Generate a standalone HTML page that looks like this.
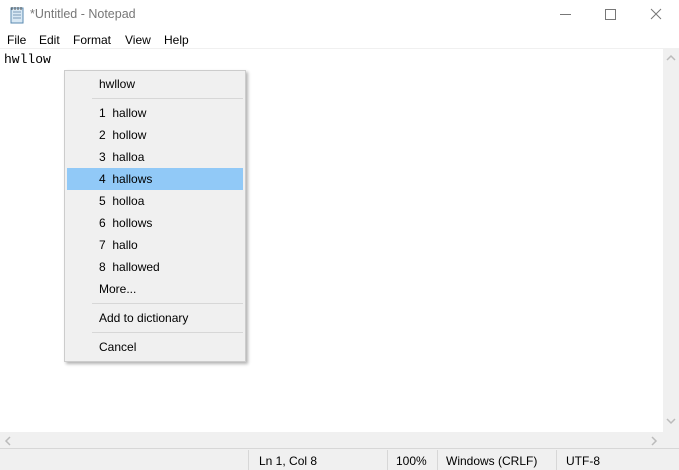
<!DOCTYPE html>
<html><head><style>
body{margin:0;width:679px;height:470px;overflow:hidden;background:#fff;font-family:"Segoe UI","Liberation Sans",sans-serif;font-size:12px;color:#000;position:relative}
.a{position:absolute}
.mi{position:absolute;left:99px;font-size:12px;color:#000}
</style></head><body>
<div class="a" style="left:0;top:0;width:679px;height:30px;background:#fff"></div>
<svg class="a" style="left:8px;top:6px" width="18" height="18"><rect x="3" y="2" width="12" height="15" fill="#d8e8f4" stroke="#5a8ab0"/><path d="M5 6h8M5 9h8M5 12h8" stroke="#7a9ab8"/><path d="M4 1v3M7 1v3M10 1v3M13 1v3" stroke="#555"/></svg>
<div class="a" style="left:30px;top:7px;font-size:12.5px;color:#777">*Untitled - Notepad</div>
<div class="a" style="left:560px;top:14px;width:11px;height:1px;background:#777"></div>
<div class="a" style="left:605px;top:9px;width:9px;height:9px;border:1px solid #777"></div>
<svg class="a" style="left:650px;top:8px" width="12" height="12"><path d="M1 1L11 11M11 1L1 11" stroke="#777"/></svg>
<div class="a" style="left:0;top:30px;width:679px;height:18px;background:#fff"></div>
<div class="a" style="left:7px;top:33px">File</div>
<div class="a" style="left:39px;top:33px">Edit</div>
<div class="a" style="left:73px;top:33px">Format</div>
<div class="a" style="left:125px;top:33px">View</div>
<div class="a" style="left:164px;top:33px">Help</div>
<div class="a" style="left:0;top:48px;width:679px;height:1px;background:#f0f0f0"></div>
<div class="a" style="left:4px;top:52px;font-family:'Liberation Mono',monospace;font-size:13px">hwllow</div>
<div class="a" style="left:663px;top:49px;width:16px;height:383px;background:#f0f0f0"></div>
<svg class="a" style="left:666px;top:54px" width="10" height="8"><path d="M1 6L5 2L9 6" stroke="#bbb" fill="none" stroke-width="1.5"/></svg>
<svg class="a" style="left:666px;top:417px" width="10" height="8"><path d="M1 2L5 6L9 2" stroke="#bbb" fill="none" stroke-width="1.5"/></svg>
<div class="a" style="left:0;top:432px;width:663px;height:16px;background:#f0f0f0"></div>
<div class="a" style="left:663px;top:432px;width:16px;height:16px;background:#f0f0f0"></div>
<svg class="a" style="left:4px;top:436px" width="8" height="10"><path d="M6 1L2 5L6 9" stroke="#bbb" fill="none" stroke-width="1.5"/></svg>
<svg class="a" style="left:650px;top:436px" width="8" height="10"><path d="M2 1L6 5L2 9" stroke="#bbb" fill="none" stroke-width="1.5"/></svg>
<div class="a" style="left:0;top:448px;width:679px;height:22px;background:#f0f0f0;border-top:1px solid #d7d7d7;box-sizing:border-box"></div>
<div class="a" style="left:248px;top:450px;width:1px;height:20px;background:#d7d7d7"></div>
<div class="a" style="left:387px;top:450px;width:1px;height:20px;background:#d7d7d7"></div>
<div class="a" style="left:437px;top:450px;width:1px;height:20px;background:#d7d7d7"></div>
<div class="a" style="left:556px;top:450px;width:1px;height:20px;background:#d7d7d7"></div>
<div class="a" style="left:259px;top:454px">Ln 1, Col 8</div>
<div class="a" style="left:396px;top:454px">100%</div>
<div class="a" style="left:446px;top:454px">Windows (CRLF)</div>
<div class="a" style="left:566px;top:454px">UTF-8</div>
<div class="a" style="left:64px;top:70px;width:182px;height:292px;background:#f0f0f0;border:1px solid #ccc;box-sizing:border-box;box-shadow:2px 2px 3px rgba(0,0,0,.3)"></div>
<div class="a" style="left:92px;top:98px;width:151px;height:1px;background:#d7d7d7"></div>
<div class="a" style="left:92px;top:303px;width:151px;height:1px;background:#d7d7d7"></div>
<div class="a" style="left:92px;top:332px;width:151px;height:1px;background:#d7d7d7"></div>
<div class="a" style="left:67px;top:168px;width:176px;height:22px;background:#91c9f7"></div>
<div class="mi" style="top:77px">hwllow</div>
<div class="mi" style="top:106px">1&nbsp; hallow</div>
<div class="mi" style="top:128px">2&nbsp; hollow</div>
<div class="mi" style="top:150px">3&nbsp; halloa</div>
<div class="mi" style="top:172px">4&nbsp; hallows</div>
<div class="mi" style="top:194px">5&nbsp; holloa</div>
<div class="mi" style="top:216px">6&nbsp; hollows</div>
<div class="mi" style="top:238px">7&nbsp; hallo</div>
<div class="mi" style="top:260px">8&nbsp; hallowed</div>
<div class="mi" style="top:282px">More...</div>
<div class="mi" style="top:311px">Add to dictionary</div>
<div class="mi" style="top:340px">Cancel</div>
</body></html>
